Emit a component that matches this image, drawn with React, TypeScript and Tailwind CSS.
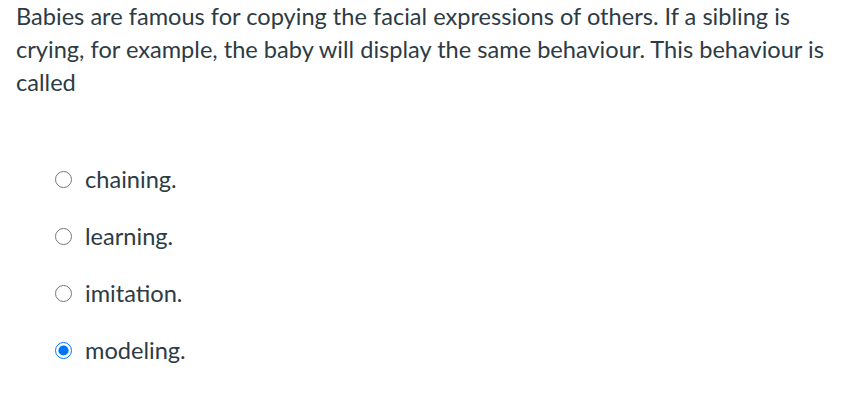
import React from "react";

const options = ["chaining.", "learning.", "imitation.", "modeling."];

export default function App() {
  return (
    <div className="w-[868px] h-[401px] bg-white text-[#2d3b45]" style={{ fontFamily: "Lato, 'Noto Sans', sans-serif" }}>
      <div className="pl-4 pr-4 pt-0 text-[23.6px] leading-[33px]">
        Babies are famous for copying the facial expressions of others. If a sibling is crying, for example, the baby will display the same behaviour. This behaviour is called
      </div>
      <div className="mt-[64px] pl-[55px] flex flex-col gap-[24px]">
        {options.map((o, i) => (
          <label key={o} className="flex items-center h-[33px] text-[23.6px] leading-[33px]">
            <input
              type="radio"
              name="q"
              defaultChecked={i === 3}
              className="m-0 w-[17px] h-[17px] mr-[13px] accent-[#0074ff]"
            />
            <span>{o}</span>
          </label>
        ))}
      </div>
    </div>
  );
}
